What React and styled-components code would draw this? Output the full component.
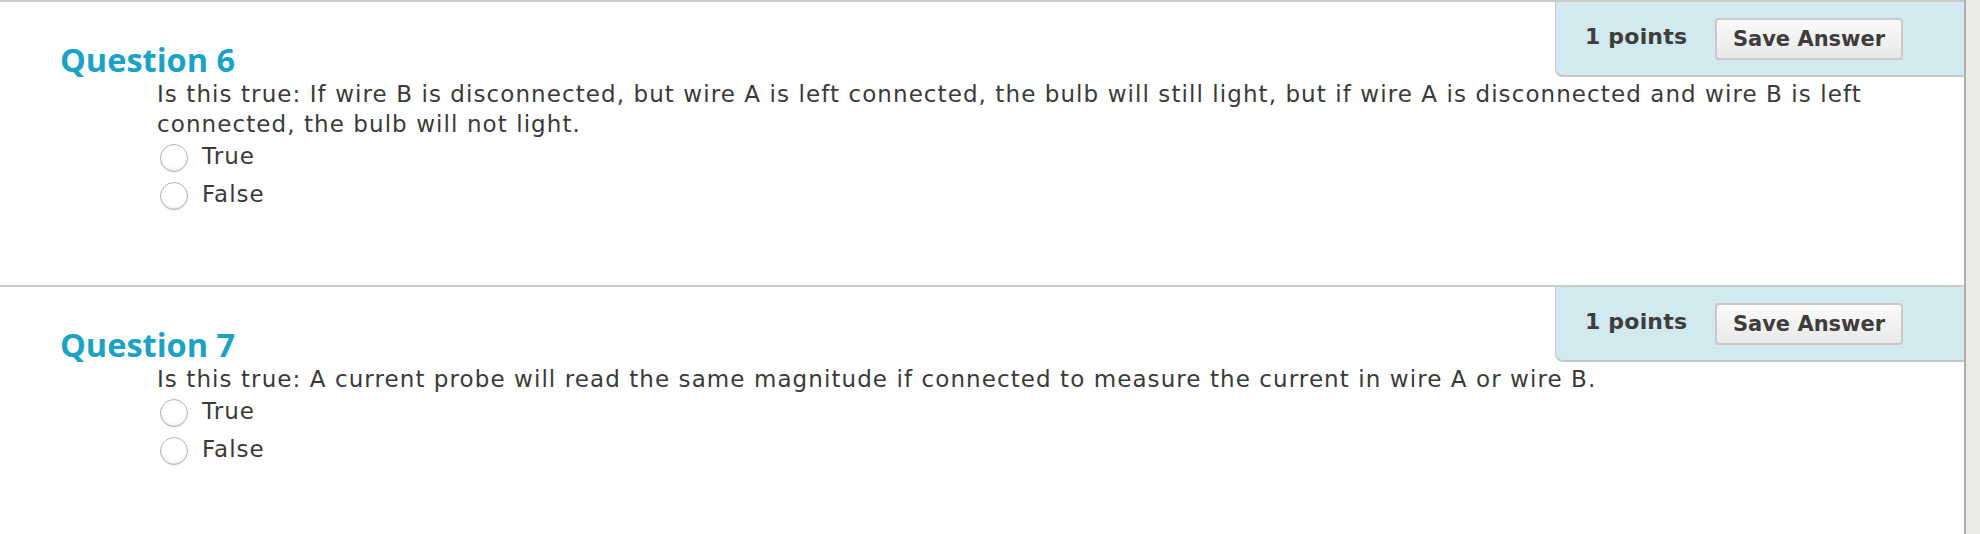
import React from "react";
import styled, { createGlobalStyle } from "styled-components";

const Global = createGlobalStyle`
  html, body { margin: 0; padding: 0; }
  body {
    background: #edebe6;
    font-family: "DejaVu Sans", "Open Sans", sans-serif;
    color: #3a3a3a;
  }
`;

const Page = styled.div`
  box-sizing: border-box;
  width: 1966px;
  height: 534px;
  overflow: hidden;
  background: #fff;
  border-right: 2px solid #adadad;
  display: flex;
  flex-direction: column;
`;

const Section = styled.section`
  box-sizing: border-box;
  flex: 0 0 285px;
  border-top: 2px solid #cbcbcb;
  &:last-child {
    flex: 1 1 auto;
  }
`;

const Header = styled.div`
  display: flex;
  justify-content: space-between;
  align-items: flex-start;
  height: 77px;
`;

const Title = styled.h3`
  margin: 0 0 3px 60px;
  align-self: flex-end;
  font-family: "Open Sans", "DejaVu Sans", sans-serif;
  font-size: 32.5px;
  line-height: 32.5px;
  font-weight: 700;
  color: #1aa3c5;
`;

const PointsBox = styled.div`
  box-sizing: border-box;
  width: 409px;
  height: 75px;
  background: #d1e9ef;
  border-left: 1px solid #c3c7c8;
  border-bottom: 2px solid #c3c7c8;
  border-bottom-left-radius: 8px;
  display: flex;
  justify-content: space-between;
  align-items: flex-start;
  padding: 0 61px 0 29px;
`;

const Points = styled.span`
  margin-top: 24px;
  font-size: 22px;
  line-height: 22px;
  letter-spacing: 0.2px;
  font-weight: 700;
  color: #3d3d3d;
`;

const SaveButton = styled.button`
  margin-top: 16px;
  box-sizing: border-box;
  width: 188px;
  height: 42px;
  padding: 0;
  border: 2px solid #cacaca;
  border-radius: 4px;
  background: linear-gradient(#fbfbfb, #e8e8e8);
  font-family: inherit;
  font-size: 21px;
  font-weight: 700;
  color: #3d3d3d;
`;

const Body = styled.div`
  margin-left: 157px;
  padding-right: 40px;
`;

const Prompt = styled.p`
  margin: 0;
  font-size: 23px;
  line-height: 30px;
  letter-spacing: 1.08px;
  color: #3a3a3a;
`;

const Options = styled.div`
  display: flex;
  flex-direction: column;
`;

const Option = styled.label`
  display: flex;
  align-items: flex-start;
  height: 38px;
`;

const Radio = styled.span`
  box-sizing: border-box;
  flex: 0 0 28px;
  height: 28px;
  margin: 5px 14px 0 3px;
  border-radius: 50%;
  border: 1px solid #b4b4b4;
  background: radial-gradient(circle at 50% 35%, #ffffff 55%, #ececec 100%);
  box-shadow: inset 0 -1px 1px rgba(0, 0, 0, 0.08), 0 1px 1px rgba(0, 0, 0, 0.06);
`;

const OptionText = styled.span`
  font-size: 23px;
  line-height: 34px;
  letter-spacing: 1px;
  color: #3a3a3a;
`;

const questions = [
  {
    n: 6,
    text: "Is this true: If wire B is disconnected, but wire A is left connected, the bulb will still light, but if wire A is disconnected and wire B is left connected, the bulb will not light.",
  },
  {
    n: 7,
    text: "Is this true: A current probe will read the same magnitude if connected to measure the current in wire A or wire B.",
  },
];

function Question({ n, text }) {
  return (
    <Section>
      <Header>
        <Title>Question {n}</Title>
        <PointsBox>
          <Points>1 points</Points>
          <SaveButton type="button">Save Answer</SaveButton>
        </PointsBox>
      </Header>
      <Body>
        <Prompt>{text}</Prompt>
        <Options>
          {["True", "False"].map((o) => (
            <Option key={o}>
              <Radio />
              <OptionText>{o}</OptionText>
            </Option>
          ))}
        </Options>
      </Body>
    </Section>
  );
}

export default function App() {
  return (
    <>
      <Global />
      <Page>
        {questions.map((q) => (
          <Question key={q.n} {...q} />
        ))}
      </Page>
    </>
  );
}
